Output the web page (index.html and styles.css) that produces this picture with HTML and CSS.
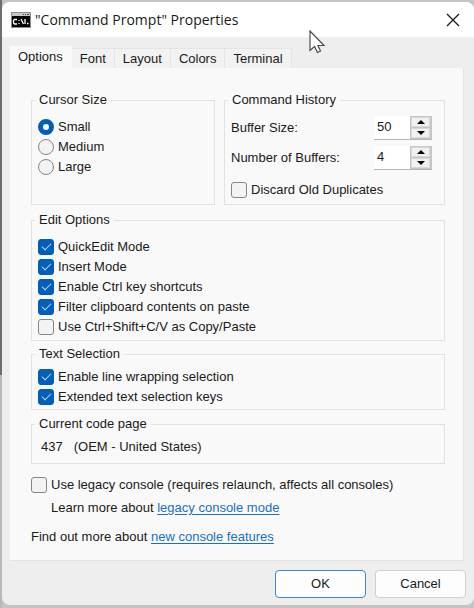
FILE: index.html
```html
<!DOCTYPE html>
<html lang="en">
<head>
    <meta charset="utf-8">
    <title>"Command Prompt" Properties</title>
    <link rel="stylesheet" href="styles.css">
</head>
<body>
    <form class="window">
        <header class="titlebar">
            <svg class="app-icon" width="20" height="16" viewBox="0 0 20 16">
                <rect width="20" height="16" fill="#8d8d8d"/>
                <rect x="1" y="1" width="18" height="3" fill="#c4c8cc"/>
                <path d="M12 2.500h1M14 2.500h1M16 2.500h2" stroke="#444"/>
                <rect x="1" y="4" width="18" height="11" fill="#000"/>
                <path d="M6 7.500H3.500L2.500 8.500V11L3.500 12H6M8 8v1M8 11v1M10 7l2.500 5M14 7v5M16 11.500h1.500" fill="none" stroke="#fff" stroke-width="1.300"/>
            </svg>
            <h1>"Command Prompt" Properties</h1>
            <button type="button" class="close" aria-label="Close">
                <svg width="14" height="14" viewBox="0 0 14 14">
                    <path d="M1 1l12 12M13 1L1 13" stroke="#1a1a1a" stroke-width="1.300"/>
                </svg>
            </button>
        </header>

        <nav class="tabs">
            <button type="button" class="tab active">Options</button>
            <button type="button" class="tab">Font</button>
            <button type="button" class="tab">Layout</button>
            <button type="button" class="tab">Colors</button>
            <button type="button" class="tab">Terminal</button>
        </nav>

        <main class="panel">
            <div class="columns">
                <fieldset class="group cursor-size">
                    <legend>Cursor Size</legend>
                    <label class="option"><input type="radio" name="cursor" checked>Small</label>
                    <label class="option"><input type="radio" name="cursor">Medium</label>
                    <label class="option"><input type="radio" name="cursor">Large</label>
                </fieldset>

                <fieldset class="group history">
                    <legend>Command History</legend>
                    <div class="field">
                        <label for="buffer-size">Buffer Size:</label>
                        <div class="spinner">
                            <input type="number" id="buffer-size" value="50">
                            <div class="arrows">
                                <button type="button" class="up" aria-label="Increase buffer size"></button>
                                <button type="button" class="down" aria-label="Decrease buffer size"></button>
                            </div>
                        </div>
                    </div>
                    <div class="field">
                        <label for="buffer-count">Number of Buffers:</label>
                        <div class="spinner">
                            <input type="number" id="buffer-count" value="4">
                            <div class="arrows">
                                <button type="button" class="up" aria-label="Increase number of buffers"></button>
                                <button type="button" class="down" aria-label="Decrease number of buffers"></button>
                            </div>
                        </div>
                    </div>
                    <label class="option"><input type="checkbox">Discard Old Duplicates</label>
                </fieldset>
            </div>

            <fieldset class="group edit-options">
                <legend>Edit Options</legend>
                <label class="option"><input type="checkbox" checked>QuickEdit Mode</label>
                <label class="option"><input type="checkbox" checked>Insert Mode</label>
                <label class="option"><input type="checkbox" checked>Enable Ctrl key shortcuts</label>
                <label class="option"><input type="checkbox" checked>Filter clipboard contents on paste</label>
                <label class="option"><input type="checkbox">Use Ctrl+Shift+C/V as Copy/Paste</label>
            </fieldset>

            <fieldset class="group text-selection">
                <legend>Text Selection</legend>
                <label class="option"><input type="checkbox" checked>Enable line wrapping selection</label>
                <label class="option"><input type="checkbox" checked>Extended text selection keys</label>
            </fieldset>

            <fieldset class="group code-page">
                <legend>Current code page</legend>
                <p><span>437</span><span>(OEM - United States)</span></p>
            </fieldset>

            <div class="legacy">
                <label class="option"><input type="checkbox">Use legacy console (requires relaunch, affects all consoles)</label>
                <p class="learn">Learn more about <a href="#">legacy console mode</a></p>
                <p class="find">Find out more about <a href="#">new console features</a></p>
            </div>
        </main>

        <footer class="actions">
            <button type="submit" class="btn primary">OK</button>
            <button type="button" class="btn">Cancel</button>
        </footer>

        <svg class="pointer" width="17" height="24" viewBox="0 0 17 24">
            <path d="M1 1v19.500l4.500-4 3 6 3-1.500-2.500-5.500h6z" fill="#fff" stroke="#4a4a52" stroke-width="1.200"/>
        </svg>
    </form>
</body>
</html>
```

FILE: styles.css
```css
* {
    box-sizing: border-box;
}

body {
    margin: 0;
    padding: 2px 0 3px 2px;
    min-height: 100vh;
    background: linear-gradient(#6e6e6e 375px, #b9b9b9 375px) left / 2px 100% no-repeat, #c4c4c4;
    font-family: "Liberation Sans", Arial, sans-serif;
    font-size: 13px;
    line-height: 18px;
    color: #1a1a1a;
}

button, input {
    font: inherit;
    color: inherit;
}

p, h1 {
    margin: 0;
}

.window {
    position: relative;
    background: #eee;
    border-radius: 8px;
    overflow: hidden;
}

.titlebar {
    display: flex;
    align-items: center;
    gap: 4px;
    height: 35px;
    padding: 0 14px 0 9px;
    background: #fff;
}

.titlebar h1 {
    flex: 1;
    font-family: "Open Sans", "Noto Sans", sans-serif;
    font-size: 14px;
    font-weight: 400;
}

.close {
    display: flex;
    padding: 0;
    border: none;
    background: none;
}

.tabs {
    display: flex;
    align-items: flex-end;
    padding: 9px 8px 0;
}

.tab {
    height: 20px;
    padding: 0 8px;
    border: 1px solid #e4e4e4;
    border-left: none;
    border-bottom: none;
    background: #f2f2f2;
}

.tab.active {
    height: 22px;
    padding: 0 8px 2px;
    border-color: #f9f9f9;
    background: #f9f9f9;
}

.panel {
    margin: 0 10px 0 8px;
    padding: 23px 18px 14px 21px;
    border: 1px solid #e4e4e4;
    border-left: none;
    border-top: none;
    background: #f9f9f9;
}

.columns {
    display: grid;
    grid-template-columns: 184fr 221fr;
    gap: 9px;
}

.group {
    min-width: 0;
    margin: 0;
    padding: 8px 3px 4px;
    border: 1px solid #e2e2e2;
}

.group legend {
    padding: 0 4px;
}

.group .option, .field {
    margin-left: 3px;
}

.option {
    display: flex;
    align-items: center;
    gap: 4px;
    height: 20px;
}

.option input {
    appearance: none;
    flex: none;
    display: grid;
    place-items: center;
    width: 16px;
    height: 16px;
    margin: 0;
    border: 1px solid #868686;
    border-radius: 3px;
    background: #f3f3f3;
}

.option input[type="radio"] {
    border-radius: 50%;
}

.option input[type="radio"]:checked {
    border: 5px solid #005fb8;
    background: #fff;
}

.option input[type="checkbox"]:checked {
    border-color: #005fb8;
    background: #005fb8;
}

/* tick mark */
.option input[type="checkbox"]:checked::after {
    content: "";
    width: 8px;
    height: 4px;
    margin-bottom: 3px;
    border: solid #b9d5ef;
    border-width: 0 0 1px 1px;
    transform: rotate(-45deg);
}

.field {
    display: flex;
    align-items: center;
    justify-content: space-between;
    height: 24px;
    margin-right: 9px;
    margin-bottom: 6px;
}

.spinner {
    display: flex;
    width: 58px;
    height: 24px;
    border-bottom: 1px solid #b5b5b5;
    background: #fff;
}

.spinner input {
    appearance: textfield;
    flex: 1;
    min-width: 0;
    padding: 0 0 2px 3px;
    border: none;
    background: none;
}

.arrows {
    display: grid;
    gap: 1px;
    width: 22px;
    padding: 1px 2px 1px 1px;
    background: #c6c6c6;
}

.arrows button {
    display: grid;
    place-items: center;
    padding: 0;
    border: 1px solid #d8d8d8;
    background: #f0f0f0;
}

.arrows button::before {
    content: "";
    border: solid transparent;
    border-width: 0 4px;
}

.arrows .up::before {
    border-bottom: 4px solid #000;
}

.arrows .down::before {
    border-top: 4px solid #000;
}

.history {
    padding-top: 7px;
}

.history .option {
    margin-top: 10px;
}

.edit-options {
    margin-top: 6px;
    padding-bottom: 3px;
}

.text-selection {
    margin-top: 4px;
    padding-top: 4px;
    padding-bottom: 2px;
}

.code-page {
    margin-top: 5px;
    padding: 5px 3px 7px;
}

.code-page p {
    display: flex;
    gap: 11px;
    padding-left: 6px;
}

.legacy {
    padding-top: 11px;
}

.learn {
    margin-top: 4px;
    padding-left: 20px;
}

.find {
    margin-top: 11px;
}

a {
    color: #1a6fc9;
    text-underline-offset: 2px;
}

.actions {
    display: flex;
    justify-content: flex-end;
    gap: 9px;
    padding: 9px 8px 7px;
}

.btn {
    width: 91px;
    height: 28px;
    border: 1px solid #d0d0d0;
    border-radius: 4px;
    background: #fdfdfd;
}

.btn.primary {
    border-color: #3c87cd;
}

.pointer {
    position: absolute;
    left: 307px;
    top: 28px;
}
```
